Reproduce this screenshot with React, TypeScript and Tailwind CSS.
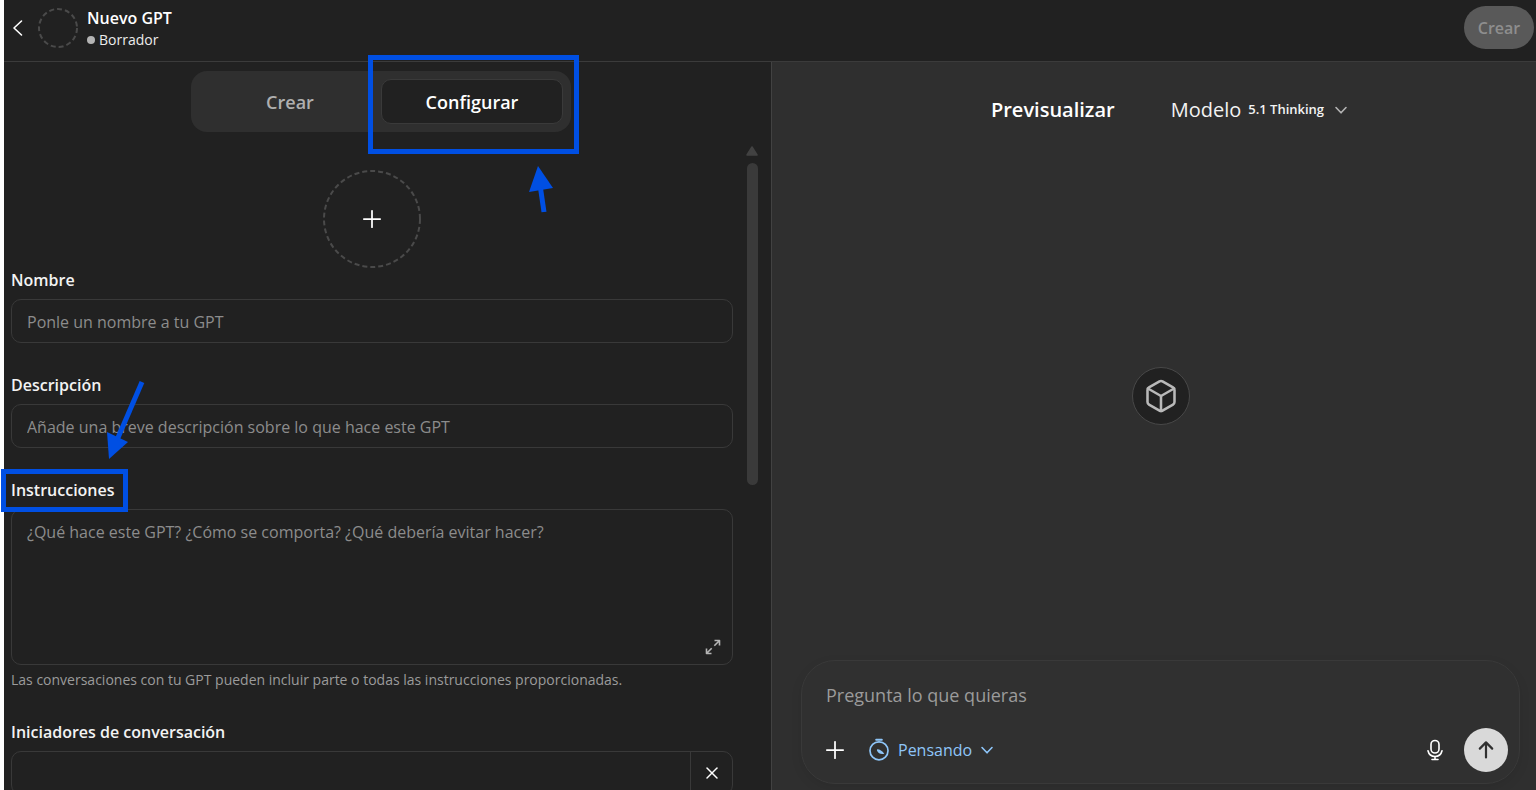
import { useState } from "react";
import { Box, Plus, X } from "lucide-react";

const fieldClass =
  "block w-full rounded-[10px] border border-[#393939] bg-transparent px-[15px] text-base text-white outline-none placeholder:text-[#8c8c8c]";

const labelClass = "block text-base leading-6 font-semibold text-[#f3f3f3]";

function DashedCircle({ size, dash }: { size: number; dash: string }) {
  return (
    <svg width={size} height={size} className="absolute inset-0" fill="none">
      <circle
        cx={size / 2}
        cy={size / 2}
        r={size / 2 - 1}
        stroke="#4a4a4a"
        strokeWidth="2"
        strokeDasharray={dash}
      />
    </svg>
  );
}

function BackIcon() {
  return (
    <svg width="12" height="18" fill="none" stroke="currentColor" strokeWidth="1.6">
      <path d="M9.500 2L2 9L9.500 16" strokeLinecap="round" strokeLinejoin="round" />
    </svg>
  );
}

function CaretIcon() {
  return (
    <svg width="14" height="10" fill="none" stroke="currentColor" strokeWidth="1.6">
      <path d="M2 2.500L7 7.800L12 2.500" strokeLinecap="round" strokeLinejoin="round" />
    </svg>
  );
}

function ExpandIcon() {
  return (
    <svg width="16" height="16" fill="none" stroke="currentColor" strokeWidth="1.6">
      <path
        d="M9.500 1.500H14.500V6.500M14.300 1.700L9.300 6.700M1.500 9.500V14.500H6.500M1.700 14.300L6.700 9.300"
        strokeLinejoin="round"
      />
    </svg>
  );
}

function MicIcon() {
  return (
    <svg width="18" height="22" fill="none" stroke="currentColor" strokeWidth="1.6">
      <rect x="5" y="1.500" width="8" height="12.500" rx="4" />
      <path
        d="M2 11.800C2.800 15.300 5.600 17.500 9 17.500S15.200 15.300 16 11.800M9 17.500V20.500M6 20.500H12"
        strokeLinecap="round"
      />
    </svg>
  );
}

function SendIcon() {
  return (
    <svg width="18" height="20" fill="none" stroke="currentColor" strokeWidth="2.2">
      <path
        d="M9 17.500V2.500M2.800 8.600L9 2.400L15.200 8.600"
        strokeLinecap="round"
        strokeLinejoin="round"
      />
    </svg>
  );
}

function TimerIcon() {
  return (
    <svg width="22" height="24" viewBox="0 0 22 24" fill="none">
      <path d="M8.200 1.800h5.600" stroke="#8ec5f8" strokeWidth="2" strokeLinecap="round" />
      <circle cx="11" cy="12.800" r="9" stroke="#8ec5f8" strokeWidth="1.700" />
      <path
        d="M9.400 11.200c2.200.2 4.900 1.500 6.900 4.600-3.400.8-6-.4-7.100-2.700-.4-.9-.4-1.700.2-1.900z"
        fill="#8ec5f8"
      />
    </svg>
  );
}

function Header() {
  return (
    <header className="flex h-[62px] shrink-0 items-start justify-between border-b border-[#3b3b3b] pr-[2px] pl-2">
      <div className="flex h-14 items-center">
        <button type="button" aria-label="Volver" className="w-5 text-white">
          <BackIcon />
        </button>
        <div className="relative ml-[6px] h-[40px] w-[40px]">
          <DashedCircle size={40} dash="5 3" />
        </div>
        <div className="ml-[9px]">
          <h1 className="text-base leading-6 font-semibold text-white">
            Nuevo GPT
          </h1>
          <p className="flex items-center gap-1 text-sm leading-5 text-[#ececec]">
            <span className="h-2 w-2 rounded-full bg-[#b4b4b4]" />
            Borrador
          </p>
        </div>
      </div>
      <button
        type="button"
        className="mt-[6px] h-[43px] w-[70px] rounded-full bg-[#595959] text-base font-semibold text-[#8e8e8e]"
      >
        Crear
      </button>
    </header>
  );
}

function Tabs() {
  const [active, setActive] = useState("configurar");

  return (
    <div className="mx-auto mt-[9px] flex h-[61px] w-[380px] rounded-2xl bg-[#2f2f2f] p-2 text-lg font-semibold">
      <button
        type="button"
        onClick={() => setActive("crear")}
        className={`flex-1 rounded-[10px] ${
          active === "crear" ? "bg-[#212121] text-white" : "text-[#afafaf]"
        }`}
      >
        Crear
      </button>
      <div className="relative flex flex-1">
        <button
          type="button"
          onClick={() => setActive("configurar")}
          className={`flex-1 rounded-[10px] ${
            active === "configurar"
              ? "border border-[#3a3a3a] bg-[#212121] text-white"
              : "text-[#afafaf]"
          }`}
        >
          Configurar
        </button>
        <span className="pointer-events-none absolute -top-6 -right-4 -bottom-[30px] -left-[13px] border-[5px] border-[#004fe3]" />
        <svg
          width="26"
          height="48"
          className="pointer-events-none absolute top-[87px] right-[9px]"
        >
          <path d="M10 0L25 22L1 26z" fill="#004fe3" />
          <path d="M12.500 22L16 46" stroke="#004fe3" strokeWidth="5" />
        </svg>
      </div>
    </div>
  );
}

function ConfigForm() {
  return (
    <form className="flex min-w-0 flex-1 flex-col gap-[30px] pt-[38px]">
      <div className="-mb-[30px] flex h-[98px] justify-center">
        <button
          type="button"
          aria-label="Añadir imagen"
          className="relative flex h-[98px] w-[98px] items-center justify-center text-white"
        >
          <DashedCircle size={98} dash="5 3" />
          <Plus size={28} strokeWidth={1.5} />
        </button>
      </div>

      <div>
        <label htmlFor="nombre" className={labelClass}>
          Nombre
        </label>
        <input
          id="nombre"
          type="text"
          placeholder="Ponle un nombre a tu GPT"
          className={`${fieldClass} mt-[7px] h-[44px] pt-0.5`}
        />
      </div>

      <div>
        <label htmlFor="descripcion" className={labelClass}>
          Descripción
        </label>
        <input
          id="descripcion"
          type="text"
          placeholder="Añade una breve descripción sobre lo que hace este GPT"
          className={`${fieldClass} mt-[7px] h-[44px] pt-0.5`}
        />
      </div>

      <div className="relative">
        <label htmlFor="instrucciones" className={labelClass}>
          Instrucciones
        </label>
        <div className="relative mt-[7px]">
          <textarea
            id="instrucciones"
            placeholder="¿Qué hace este GPT? ¿Cómo se comporta? ¿Qué debería evitar hacer?"
            className={`${fieldClass} h-[156px] resize-none py-[10px] leading-6`}
          />
          <button
            type="button"
            aria-label="Expandir"
            className="absolute right-3 bottom-[10px] text-[#b4b4b4]"
          >
            <ExpandIcon />
          </button>
        </div>
        <p className="mt-[5px] text-sm leading-5 text-[#9b9b9b]">
          Las conversaciones con tu GPT pueden incluir parte o todas las
          instrucciones proporcionadas.
        </p>
        <span className="pointer-events-none absolute -top-[9px] -left-[10px] h-[43px] w-[127px] border-[5px] border-[#004fe3]" />
        <svg
          width="40"
          height="80"
          className="pointer-events-none absolute -top-[98px] left-[95px]"
        >
          <path d="M3 79L1 52L22 62z" fill="#004fe3" />
          <path d="M11 60L36 2" stroke="#004fe3" strokeWidth="5" />
        </svg>
      </div>

      <div>
        <label htmlFor="iniciador" className={labelClass}>
          Iniciadores de conversación
        </label>
        <div className="mt-[7px] flex h-[44px] rounded-[10px] border border-[#393939]">
          <input
            id="iniciador"
            type="text"
            className="min-w-0 flex-1 bg-transparent px-[15px] text-base text-white outline-none"
          />
          <button
            type="button"
            aria-label="Eliminar"
            className="flex w-[42px] items-center justify-center border-l border-[#393939] text-white"
          >
            <X size={20} strokeWidth={1.8} />
          </button>
        </div>
      </div>
    </form>
  );
}

function Scrollbar() {
  return (
    <div className="flex w-3 flex-col items-center pt-[14px]">
      <svg width="12" height="10">
        <path
          d="M6 1L11 9H1z"
          fill="#424242"
          stroke="#424242"
          strokeWidth="1.500"
          strokeLinejoin="round"
        />
      </svg>
      <div className="mt-[7px] h-1/2 w-[11px] rounded-full bg-[#3a3a3a]" />
    </div>
  );
}

function Preview() {
  return (
    <section className="flex min-w-0 flex-1 flex-col bg-[#2f2f2f] pr-4 pb-[6px] pl-[29px]">
      <div className="flex h-[95px] items-center justify-center gap-14 pl-[18px]">
        <h2 className="text-xl font-semibold text-white">Previsualizar</h2>
        <button type="button" className="flex items-center text-[#f3f3f3]">
          <span className="text-xl">Modelo</span>
          <span className="ml-[7px] text-[13px] font-semibold">5.1 Thinking</span>
          <span className="ml-[10px] text-[#b4b4b4]">
            <CaretIcon />
          </span>
        </button>
      </div>

      <div className="flex flex-1 items-center justify-center pb-[26px]">
        <div className="flex h-[58px] w-[58px] items-center justify-center rounded-full border border-[#484848] bg-[#212121] text-[#b9b9b9]">
          <Box size={36} strokeWidth={1.7} />
        </div>
      </div>

      <div className="flex h-[124px] flex-col justify-between rounded-[34px] border border-[#393939] bg-[#303030] pt-5 pr-[11px] pb-[11px] pl-6 shadow-[0_4px_12px_rgba(0,0,0,0.08)]">
        <input
          type="text"
          aria-label="Mensaje"
          placeholder="Pregunta lo que quieras"
          className="h-7 w-full bg-transparent text-lg text-white outline-none placeholder:text-[#9b9b9b]"
        />
        <div className="flex items-center">
          <button type="button" aria-label="Añadir" className="-ml-[5px] text-white">
            <Plus size={28} strokeWidth={1.5} />
          </button>
          <button
            type="button"
            className="ml-[19px] flex items-center text-base text-[#8ec5f8]"
          >
            <TimerIcon />
            <span className="ml-2">Pensando</span>
            <span className="ml-2">
              <CaretIcon />
            </span>
          </button>
          <div className="ml-auto flex items-center gap-5">
            <button type="button" aria-label="Dictar" className="text-white">
              <MicIcon />
            </button>
            <button
              type="button"
              aria-label="Enviar"
              className="flex h-11 w-11 items-center justify-center rounded-full bg-[#d9d9d9] text-[#303030]"
            >
              <SendIcon />
            </button>
          </div>
        </div>
      </div>
    </section>
  );
}

export default function App() {
  return (
    <div className="h-screen overflow-hidden bg-white pl-1 font-['Open_Sans','Noto_Sans',sans-serif]">
      <div className="flex h-full flex-col bg-[#212121]">
        <Header />
        <main className="flex min-h-0 flex-1">
          <section className="flex w-[calc(50%+2px)] flex-col border-r border-[#424242] pr-[13px]">
            <Tabs />
            <div className="flex min-h-0 flex-1 gap-[13px] pl-[7px]">
              <ConfigForm />
              <Scrollbar />
            </div>
          </section>
          <Preview />
        </main>
      </div>
    </div>
  );
}
